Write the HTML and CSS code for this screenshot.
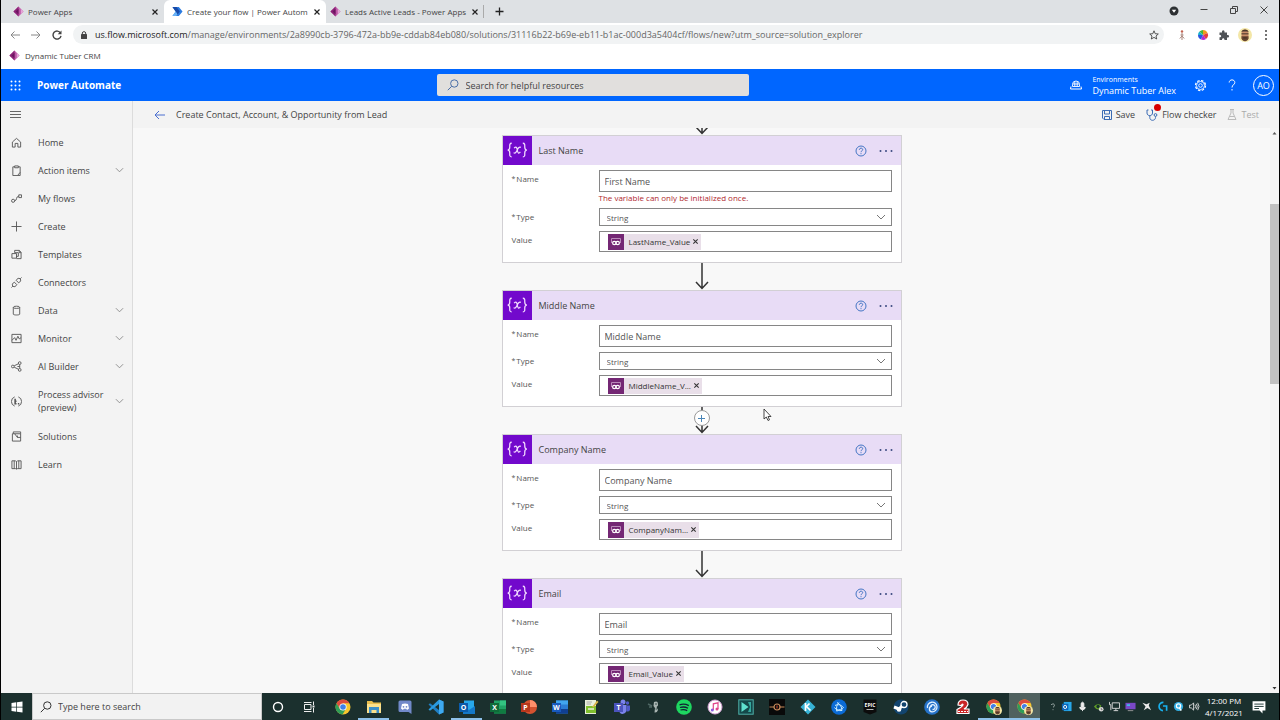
FILE: index.html
```html
<!DOCTYPE html>
<html lang="en">
<head>
    <meta charset="UTF-8">
    <meta name="viewport" content="width=device-width, initial-scale=1.0">
    <title>Create your flow | Power Automate</title>
    <link rel="stylesheet" href="styles.css">
</head>
<body>

<!-- Shared icons -->
<svg class="symbols" aria-hidden="true">
    <symbol id="i-apps" viewBox="0 0 12 12">
        <path d="M6 0.500L11.500 6L6 11.500L0.500 6Z" fill="#c05aa8"/>
        <path d="M6 0.500L0.500 6L6 11.500Z" fill="#8a2277"/>
        <path d="M6 0.500L11.500 6L8.500 9V3Z" fill="#e3a5d6"/>
        <path d="M6 3L3 6L6 9Z" fill="#6b1560"/>
    </symbol>
    <symbol id="i-x" viewBox="0 0 8 8"><path d="M1.500 1.500L6.500 6.500M6.500 1.500L1.500 6.500" fill="none" stroke="currentColor" stroke-width="1.200"/></symbol>
    <symbol id="i-chevron" viewBox="0 0 10 6"><path d="M1 1L5 5L9 1" fill="none" stroke="currentColor"/></symbol>
    <symbol id="i-arrow" viewBox="0 0 14 27"><path d="M7 0V25M1 19L7 25.500L13 19" fill="none" stroke="#333" stroke-width="1.500"/></symbol>
    <symbol id="i-help" viewBox="0 0 12 12">
        <circle cx="6" cy="6" r="5" fill="none" stroke="#4475c4"/>
        <path d="M4.300 4.800C4.300 2.600 7.700 2.700 7.700 4.600C7.700 5.900 6 5.700 6 7.200M6 8.200V9.200" fill="none" stroke="#4475c4"/>
    </symbol>
    <symbol id="i-dots" viewBox="0 0 14 4"><g fill="#3b4a80"><circle cx="1.500" cy="2" r="1"/><circle cx="7" cy="2" r="1"/><circle cx="12.500" cy="2" r="1"/></g></symbol>
    <symbol id="i-var" viewBox="0 0 30 30">
        <g fill="none" stroke="#f3dcff" stroke-width="1.300">
            <path d="M9 7.500C6.500 7.500 7 9.500 7 11.500C7 13.500 6.500 14.500 4.800 14.500C6.500 14.500 7 15.500 7 17.500C7 19.500 6.500 21.500 9 21.500"/>
            <path d="M20.500 7.500C23 7.500 22.500 9.500 22.500 11.500C22.500 13.500 23 14.500 24.700 14.500C23 14.500 22.500 15.500 22.500 17.500C22.500 19.500 23 21.500 20.500 21.500"/>
            <path d="M11.500 12.500C13.500 10.500 14.300 11.500 14.800 14.500C15.300 17.800 16.200 18.500 18 16.500M18.500 11.800C16.500 10.800 15.500 13 14.500 15C13.500 17.200 12.500 18.500 11 17.200"/>
        </g>
    </symbol>
    <symbol id="i-cds" viewBox="0 0 16 16">
        <rect width="16" height="16" fill="#742774"/>
        <path d="M3.500 9V4.500H12.500V9" fill="none" stroke="#b98ab9"/>
        <circle cx="6.300" cy="9" r="1.700" fill="none" stroke="#fff" stroke-width="1.200"/>
        <circle cx="9.700" cy="9" r="1.700" fill="none" stroke="#fff" stroke-width="1.200"/>
    </symbol>
    <symbol id="i-chrome" viewBox="0 0 16 16">
        <circle cx="8" cy="8" r="7.500" fill="#f7c52d"/>
        <path d="M1.500 4.200A7.500 7.500 0 0 1 14.500 4.300H8L4.800 9.800Z" fill="#dd4b3e"/>
        <path d="M1.500 4.200A7.500 7.500 0 0 0 7.500 15.500L11 9.800L4.800 9.800Z" fill="#2f9d58"/>
        <circle cx="8" cy="8" r="3.600" fill="#fff"/>
        <circle cx="8" cy="8" r="2.800" fill="#3f7fe8"/>
    </symbol>
    <symbol id="i-face" viewBox="0 0 12 12">
        <circle cx="6" cy="6" r="6" fill="#f3e6a6"/>
        <path d="M3 4C3 0.500 9 0.500 9 4V8C9 12 3 12 3 8Z" fill="#c98d67"/>
        <path d="M3 3.500C3 0.500 9 0.500 9 3.500L8 3H4Z" fill="#49372c"/>
        <path d="M3 7H9V9C8 12 4 12 3 9Z" fill="#68452f"/>
        <path d="M3 5H9M4.500 8.500H7.500" stroke="#3a2c24" stroke-width="0.800"/>
    </symbol>
</svg>

<!-- Browser window -->
<div class="tabs">
    <a href="#" class="tab">
        <svg class="tab-icon"><use href="#i-apps"/></svg>
        <span class="tab-title">Power Apps</span>
        <svg class="tab-close"><use href="#i-x"/></svg>
    </a>
    <a href="#" class="tab current">
        <svg class="tab-icon" viewBox="0 0 12 12"><path d="M0.500 1H7.500L11.500 6L7.500 11H0.500L4 6Z" fill="#2b7be0"/><path d="M0.500 1H5L8.500 6L6 9.500L4 6Z" fill="#174aa8"/><path d="M0.500 11L4 6L6 9L4.500 11Z" fill="#69b2f5"/></svg>
        <span class="tab-title">Create your flow | Power Autom</span>
        <svg class="tab-close"><use href="#i-x"/></svg>
    </a>
    <a href="#" class="tab last">
        <svg class="tab-icon"><use href="#i-apps"/></svg>
        <span class="tab-title">Leads Active Leads - Power Apps</span>
        <svg class="tab-close"><use href="#i-x"/></svg>
    </a>
    <button class="new-tab" aria-label="New tab"><svg width="9" height="9" viewBox="0 0 9 9"><path d="M4.500 0.500V8.500M0.500 4.500H8.500" stroke="#222" stroke-width="1.300"/></svg></button>
    <div class="window-buttons">
        <button aria-label="Search tabs"><svg width="10" height="14" viewBox="0 0 10 14"><circle cx="5" cy="8" r="4.500" fill="#2d3033"/><path d="M2.800 6.800H7.200L5 9.800Z" fill="#fff"/></svg></button>
        <button aria-label="Minimize"><svg width="8" height="8" viewBox="0 0 8 8"><path d="M0.500 3.500H7.500" stroke="#444"/></svg></button>
        <button aria-label="Restore"><svg width="8" height="8" viewBox="0 0 8 8"><path d="M0.500 2.500H5.500V7.500H0.500ZM2.500 2V0.500H7.500V5.500H6" fill="none" stroke="#444"/></svg></button>
        <button aria-label="Close"><svg width="8" height="8" viewBox="0 0 8 8"><path d="M0.500 0.500L7.500 7.500M7.500 0.500L0.500 7.500" stroke="#444"/></svg></button>
    </div>
</div>

<div class="toolbar">
    <button aria-label="Back"><svg width="10" height="8" viewBox="0 0 10 8"><path d="M10 4H1M4.500 0.500L1 4L4.500 7.500" fill="none" stroke="#888"/></svg></button>
    <button aria-label="Forward"><svg width="10" height="8" viewBox="0 0 10 8"><path d="M0 4H9M5.500 0.500L9 4L5.500 7.500" fill="none" stroke="#888"/></svg></button>
    <button aria-label="Reload"><svg width="10" height="10" viewBox="0 0 10 10"><path d="M8.500 3A4 4 0 1 0 9 5.800" fill="none" stroke="#444" stroke-width="1.400"/><path d="M9.500 0.500V4.300H5.700Z" fill="#444"/></svg></button>
    <div class="omnibox">
        <svg width="6" height="8" viewBox="0 0 6 8"><rect y="3" width="6" height="5" rx="0.500" fill="#444"/><path d="M1.300 3V2C1.300 0.200 4.700 0.200 4.700 2V3" fill="none" stroke="#444"/></svg>
        <div class="url"><b>us.flow.microsoft.com</b>/manage/environments/2a8990cb-3796-472a-bb9e-cddab84eb080/solutions/31116b22-b69e-eb11-b1ac-000d3a5404cf/flows/new?utm_source=solution_explorer</div>
        <svg width="10" height="10" viewBox="0 0 10 10"><path d="M5 0.800L6.200 3.700L9.300 4L7 6L7.700 9L5 7.400L2.300 9L3 6L0.700 4L3.800 3.700Z" fill="none" stroke="#444" stroke-width="0.900"/></svg>
    </div>
    <div class="extensions">
        <button aria-label="Extension"><svg width="12" height="12" viewBox="0 0 12 12"><circle cx="6" cy="2.500" r="1.200" fill="#c2604f"/><path d="M6 4V11M4.500 6H7.500M3.800 9.500L6 7L8.200 9.500" fill="none" stroke="#a9877e"/></svg></button>
        <button aria-label="Color picker"><svg width="12" height="12" viewBox="0 0 12 12"><path d="M6 6V1A5 5 0 0 1 10.500 4Z" fill="#f09a1a"/><path d="M6 6L10.500 4A5 5 0 0 1 9 10Z" fill="#e33d3d"/><path d="M6 6L9 10A5 5 0 0 1 4 10.600Z" fill="#b42bd0"/><path d="M6 6L4 10.600A5 5 0 0 1 1 6Z" fill="#2b55e0"/><path d="M6 6H1A5 5 0 0 1 2.500 2.500Z" fill="#1bb0d0"/><path d="M6 6L2.500 2.500A5 5 0 0 1 6 1Z" fill="#42b63c"/></svg></button>
        <button aria-label="Extensions"><svg width="12" height="12" viewBox="0 0 12 12"><path d="M1.500 3.500H4C3.500 0.500 7 0.500 6.500 3.500H9V6C11.800 5.500 11.800 9 9 8.500V11H6.500C6.500 8.500 4 8.500 4 11H1.500V8.300C3.800 8.300 3.800 6 1.500 6Z" fill="#505357"/></svg></button>
        <button aria-label="Profile"><svg width="14" height="14"><use href="#i-face"/></svg></button>
        <button aria-label="Menu"><svg width="12" height="12" viewBox="0 0 12 12"><g fill="#444"><circle cx="6" cy="2" r="1"/><circle cx="6" cy="6" r="1"/><circle cx="6" cy="10" r="1"/></g></svg></button>
    </div>
</div>

<div class="bookmarks">
    <a href="#"><svg class="tab-icon"><use href="#i-apps"/></svg>Dynamic Tuber CRM</a>
</div>

<!-- Power Automate header -->
<header class="header">
    <div class="brand">
        <button aria-label="App launcher"><svg width="11" height="11" viewBox="0 0 11 11"><g fill="#fff"><circle cx="1.500" cy="1.500" r="1"/><circle cx="5.500" cy="1.500" r="1"/><circle cx="9.500" cy="1.500" r="1"/><circle cx="1.500" cy="5.500" r="1"/><circle cx="5.500" cy="5.500" r="1"/><circle cx="9.500" cy="5.500" r="1"/><circle cx="1.500" cy="9.500" r="1"/><circle cx="5.500" cy="9.500" r="1"/><circle cx="9.500" cy="9.500" r="1"/></g></svg></button>
        <span class="title">Power Automate</span>
    </div>
    <label class="search">
        <svg width="12" height="12" viewBox="0 0 12 12"><circle cx="7.300" cy="4.500" r="3.700" fill="none" stroke="#4a6fa8"/><path d="M4.700 7.300L0.800 11.200" stroke="#4a6fa8"/></svg>
        <input type="text" placeholder="Search for helpful resources" aria-label="Search for helpful resources">
    </label>
    <div class="header-right">
        <button class="environment">
            <svg width="12" height="12" viewBox="0 0 12 12"><path d="M2.500 7.500V5.500A3.500 3.500 0 0 1 9.500 5.500V7.500ZM2.500 5H9.500M4.800 2.500V7.500M7.200 2.500V7.500" fill="none" stroke="#fff" stroke-width="0.900"/><path d="M1 7.500L0.500 10H11.500L11 7.500" fill="none" stroke="#fff"/></svg>
            <span><small>Environments</small>Dynamic Tuber Alex</span>
        </button>
        <button class="header-icon" aria-label="Settings"><svg width="13" height="13" viewBox="0 0 13 13"><circle cx="6.500" cy="6.500" r="5" fill="none" stroke="#fff" stroke-width="1.300" stroke-dasharray="2.400 1.520"/><circle cx="6.500" cy="6.500" r="4" fill="none" stroke="#fff" stroke-width="0.800"/><circle cx="6.500" cy="6.500" r="1.800" fill="none" stroke="#fff" stroke-width="0.900"/></svg></button>
        <button class="header-icon" aria-label="Help"><svg width="8" height="12" viewBox="0 0 8 12"><path d="M1.200 3.500C1.200 0 6.800 0 6.800 3.500C6.800 5.800 4 5.800 4 8.500M4 10V11.500" fill="none" stroke="#fff"/></svg></button>
        <button class="avatar">AO</button>
    </div>
</header>

<div class="app">
    <nav class="sidebar">
        <button class="menu" aria-label="Collapse menu"><svg width="11" height="7" viewBox="0 0 11 7"><path d="M0 0.500H11M0 3.500H11M0 6.500H11" stroke="#666"/></svg></button>
        <a href="#"><svg viewBox="0 0 12 12"><path d="M1.500 5.500L6 1.500L10.500 5.500V11H7.500V7H4.500V11H1.500Z"/></svg><span>Home</span></a>
        <a href="#"><svg viewBox="0 0 12 12"><path d="M4 2H2V11.500H10V2H8M4 1H8V3H4ZM10 8L7.500 11"/></svg><span>Action items</span><svg class="chevron"><use href="#i-chevron"/></svg></a>
        <a href="#"><svg viewBox="0 0 12 12"><circle cx="2.300" cy="8.500" r="1.700"/><path d="M4 8.500C7 8.500 5 3.500 8.500 3.500M8.500 2H11.500V5H8.500Z"/></svg><span>My flows</span></a>
        <a href="#"><svg viewBox="0 0 12 12"><path d="M6 0.500V11.500M0.500 6H11.500"/></svg><span>Create</span></a>
        <a href="#"><svg viewBox="0 0 12 12"><path d="M4 4V1.500H9L11 3.500V10.500H6M1 5H6V10H1ZM4 4H8V8H6M9 1.500V4H11"/></svg><span>Templates</span></a>
        <a href="#"><svg viewBox="0 0 12 12"><path d="M0.500 11.500L2 10M2 10C0.500 8 2 7 3.500 5.500L6.500 8.500C5 10 4 11.500 2 10ZM5.500 3.500L8.500 6.500C10 5 11.500 4 10 2C8 0.500 7 2 5.500 3.500M10 2L11.500 0.500"/></svg><span>Connectors</span></a>
        <a href="#"><svg viewBox="0 0 12 12"><path d="M2.500 2.500V10C2.500 11.200 9.500 11.200 9.500 10V2.500"/><ellipse cx="6" cy="2.500" rx="3.500" ry="1.200"/></svg><span>Data</span><svg class="chevron"><use href="#i-chevron"/></svg></a>
        <a href="#"><svg viewBox="0 0 12 12"><path d="M1 1.500H11V10.500H1ZM1 8L4 5L5.500 8L7.500 3.500L9 6.500L11 5"/></svg><span>Monitor</span><svg class="chevron"><use href="#i-chevron"/></svg></a>
        <a href="#"><svg viewBox="0 0 12 12"><circle cx="2" cy="6" r="1.500"/><circle cx="9.500" cy="2.300" r="1.500"/><circle cx="9.500" cy="9.700" r="1.500"/><path d="M3.500 5.200L8.200 3M3.500 6.800L8.200 9M9.500 4V8M7 6H9.500"/></svg><span>AI Builder</span><svg class="chevron"><use href="#i-chevron"/></svg></a>
        <a href="#" class="two-lines"><svg viewBox="0 0 12 12"><path d="M4 1A5.300 5.300 0 0 0 4 11M8 1A5.300 5.300 0 0 1 8 11"/><path d="M4.500 3V8.500H6M7.500 8.500H9M4.500 5.800H6" stroke-width="1.700"/></svg><span>Process advisor (preview)</span><svg class="chevron"><use href="#i-chevron"/></svg></a>
        <a href="#"><svg viewBox="0 0 12 12"><path d="M1.500 3V11H10.500V3ZM2.500 3V1H10.500V3M4 3L7 7H10.500M7 7V5"/></svg><span>Solutions</span></a>
        <a href="#"><svg viewBox="0 0 12 12"><path d="M1 2H5L6 3L7 2H11V10.500H7L6 11L5 10.500H1ZM6 3V11M3.500 2V10.500M8.500 2V10.500"/></svg><span>Learn</span></a>
    </nav>

    <main class="main">
        <div class="commands">
            <a href="#" class="back" aria-label="Back"><svg width="11" height="10" viewBox="0 0 11 10"><path d="M11 5H1M5 1L1 5L5 9" fill="none" stroke="#4a6fd0"/></svg></a>
            <span class="flow-name">Create Contact, Account, &amp; Opportunity from Lead</span>
            <button><svg width="10" height="10" viewBox="0 0 10 10"><path d="M0.500 0.500H9.500V9.500H2L0.500 8ZM2.500 0.500V4H7.500V0.500M2.500 9.500V6.500H7.500V9.500" fill="none" stroke="#3c6cb4"/></svg>Save</button>
            <button><span class="checker-icon"><svg width="12" height="12" viewBox="0 0 12 12"><path d="M2.500 1H1V4C1 7.500 6.500 7.500 6.500 4V1H5M3.800 6.500V8.500C3.800 12.500 9.500 12 9.500 8.500V7.500" fill="none" stroke="#3c6cb4"/><circle cx="9.500" cy="6" r="1.400" fill="none" stroke="#3c6cb4"/></svg><i class="badge"></i></span>Flow checker</button>
            <button disabled><svg width="10" height="11" viewBox="0 0 10 11"><path d="M3 0.500H7M4 0.500V4L1 10.500H9L6 4V0.500M2.500 7.500H7.500" fill="none" stroke="#bbb"/></svg>Test</button>
        </div>

        <div class="canvas">
            <div class="flow">
                <div class="connector cut"><svg><use href="#i-arrow"/></svg></div>

                <section class="card">
                    <div class="card-header">
                        <svg class="card-icon"><use href="#i-var"/></svg>
                        <h2>Last Name</h2>
                        <button aria-label="Help"><svg width="12" height="12"><use href="#i-help"/></svg></button>
                        <button aria-label="More"><svg width="14" height="4"><use href="#i-dots"/></svg></button>
                    </div>
                    <div class="card-body">
                        <label for="name1"><sup>*</sup>Name</label>
                        <div><input type="text" id="name1" value="First Name"><p class="error">The variable can only be initialized once.</p></div>
                        <label for="type1"><sup>*</sup>Type</label>
                        <div class="select"><select id="type1"><option>String</option></select><svg><use href="#i-chevron"/></svg></div>
                        <span class="label">Value</span>
                        <div class="value"><span class="token"><svg><use href="#i-cds"/></svg>LastName_Value<button aria-label="Remove"><svg><use href="#i-x"/></svg></button></span></div>
                    </div>
                </section>

                <div class="connector"><svg><use href="#i-arrow"/></svg></div>

                <section class="card">
                    <div class="card-header">
                        <svg class="card-icon"><use href="#i-var"/></svg>
                        <h2>Middle Name</h2>
                        <button aria-label="Help"><svg width="12" height="12"><use href="#i-help"/></svg></button>
                        <button aria-label="More"><svg width="14" height="4"><use href="#i-dots"/></svg></button>
                    </div>
                    <div class="card-body">
                        <label for="name2"><sup>*</sup>Name</label>
                        <div><input type="text" id="name2" value="Middle Name"></div>
                        <label for="type2"><sup>*</sup>Type</label>
                        <div class="select"><select id="type2"><option>String</option></select><svg><use href="#i-chevron"/></svg></div>
                        <span class="label">Value</span>
                        <div class="value"><span class="token"><svg><use href="#i-cds"/></svg>MiddleName_V...<button aria-label="Remove"><svg><use href="#i-x"/></svg></button></span></div>
                    </div>
                </section>

                <div class="connector">
                    <svg><use href="#i-arrow"/></svg>
                    <button class="insert" aria-label="Insert a new step"><svg viewBox="0 0 9 9"><path d="M4.500 1V8M1 4.500H8" stroke="#4b86b8"/></svg></button>
                    <svg class="cursor" viewBox="0 0 9 14"><path d="M1 1V11L3.300 9L5 12.500L6.500 11.800L5 8.500H8Z" fill="#fff" stroke="#333" stroke-width="0.900"/></svg>
                </div>

                <section class="card">
                    <div class="card-header">
                        <svg class="card-icon"><use href="#i-var"/></svg>
                        <h2>Company Name</h2>
                        <button aria-label="Help"><svg width="12" height="12"><use href="#i-help"/></svg></button>
                        <button aria-label="More"><svg width="14" height="4"><use href="#i-dots"/></svg></button>
                    </div>
                    <div class="card-body">
                        <label for="name3"><sup>*</sup>Name</label>
                        <div><input type="text" id="name3" value="Company Name"></div>
                        <label for="type3"><sup>*</sup>Type</label>
                        <div class="select"><select id="type3"><option>String</option></select><svg><use href="#i-chevron"/></svg></div>
                        <span class="label">Value</span>
                        <div class="value"><span class="token"><svg><use href="#i-cds"/></svg>CompanyNam...<button aria-label="Remove"><svg><use href="#i-x"/></svg></button></span></div>
                    </div>
                </section>

                <div class="connector"><svg><use href="#i-arrow"/></svg></div>

                <section class="card">
                    <div class="card-header">
                        <svg class="card-icon"><use href="#i-var"/></svg>
                        <h2>Email</h2>
                        <button aria-label="Help"><svg width="12" height="12"><use href="#i-help"/></svg></button>
                        <button aria-label="More"><svg width="14" height="4"><use href="#i-dots"/></svg></button>
                    </div>
                    <div class="card-body">
                        <label for="name4"><sup>*</sup>Name</label>
                        <div><input type="text" id="name4" value="Email"></div>
                        <label for="type4"><sup>*</sup>Type</label>
                        <div class="select"><select id="type4"><option>String</option></select><svg><use href="#i-chevron"/></svg></div>
                        <span class="label">Value</span>
                        <div class="value"><span class="token"><svg><use href="#i-cds"/></svg>Email_Value<button aria-label="Remove"><svg><use href="#i-x"/></svg></button></span></div>
                    </div>
                </section>
            </div>

            <div class="scrollbar">
                <svg viewBox="0 0 9 9"><path d="M2.500 6L4.500 3.500L6.500 6Z" fill="#555"/></svg>
                <div class="track"><div class="thumb"></div></div>
                <svg viewBox="0 0 9 9"><path d="M2.500 3.500L4.500 6L6.500 3.500Z" fill="#333"/></svg>
            </div>
        </div>
    </main>
</div>

<!-- Windows taskbar -->
<footer class="taskbar">
    <button aria-label="Start"><svg viewBox="0 0 16 16"><path d="M2.500 4L7.300 3.300V7.700H2.500ZM8 3.200L13.500 2.500V7.700H8ZM2.500 8.400H7.300V12.800L2.500 12.100ZM8 8.400H13.500V13.500L8 12.800Z" fill="#fff"/></svg></button>
    <label class="task-search">
        <svg width="12" height="12" viewBox="0 0 12 12"><circle cx="7.300" cy="4.500" r="3.700" fill="none" stroke="#333"/><path d="M4.700 7.300L0.800 11.200" stroke="#333"/></svg>
        <input type="text" placeholder="Type here to search" aria-label="Type here to search">
    </label>
    <button aria-label="Cortana"><svg viewBox="0 0 16 16"><circle cx="8" cy="8" r="4.500" fill="none" stroke="#fff" stroke-width="1.400"/></svg></button>
    <button class="task-view" aria-label="Task view"><svg viewBox="0 0 16 16"><path d="M3 3.500H10.500M3 12.500H10.500M3.500 5.500H10V10.500H3.500ZM12.500 2.500V6M12.500 9V13.500" fill="none" stroke="#eee"/><path d="M11.500 6.500H13.500V8.500H11.500Z" fill="#eee"/></svg></button>
    <button aria-label="Chrome"><svg><use href="#i-chrome"/></svg></button>
    <button class="open" aria-label="File Explorer"><svg viewBox="0 0 16 16"><path d="M1 2H6L7.500 3.500H15V14H1Z" fill="#e9bd4d"/><path d="M1 5H15V14H1Z" fill="#fbe08c"/><path d="M3 8H13V14H10.500V11H5.500V14H3Z" fill="#3c8fc9"/></svg></button>
    <button aria-label="Discord"><svg viewBox="0 0 16 16"><path d="M3 1.500H13Q14.500 1.500 14.500 3V15L11.500 13H3Q1.500 13 1.500 11.500V3Q1.500 1.500 3 1.500Z" fill="#7289c9"/><path d="M5 5Q8 3.800 11 5L12 9.500L10 11L9.300 9.800H6.700L6 11L4 9.500Z" fill="#fff"/><circle cx="6.500" cy="7.800" r="0.900" fill="#7289c9"/><circle cx="9.500" cy="7.800" r="0.900" fill="#7289c9"/></svg></button>
    <button aria-label="Visual Studio Code"><svg viewBox="0 0 16 16"><path d="M11 0.500L15.500 2.500V13.500L11 15.500L0.500 5.500L2 4.300L11 11Z" fill="#1f7ec2"/><path d="M11 0.500V5L2 11.700L0.500 10.500Z" fill="#2a9ae0"/><path d="M11 0.500L15.500 2.500V13.500L11 15.500Z" fill="#3eaaf0"/></svg></button>
    <button class="open" aria-label="Outlook"><svg viewBox="0 0 16 16"><rect x="5" y="1.500" width="10" height="12" fill="#28a8ea"/><path d="M4 7L10 11L16 7V15H4Z" fill="#1478c8"/><rect y="4" width="9" height="9" fill="#0a5bab"/><text x="4.500" y="11" font-size="7">O</text></svg></button>
    <button aria-label="Excel"><svg viewBox="0 0 16 16"><rect x="4" y="1.500" width="12" height="13" fill="#21a366"/><rect x="10" y="1.500" width="6" height="5" fill="#33c481"/><rect x="4" y="10" width="12" height="4.500" fill="#107c41"/><rect y="4" width="9" height="9" fill="#0f6b39"/><text x="4.500" y="11" font-size="7">X</text></svg></button>
    <button aria-label="PowerPoint"><svg viewBox="0 0 16 16"><circle cx="9" cy="8" r="7" fill="#d35230"/><path d="M9 1A7 7 0 0 1 16 8H9Z" fill="#ff8f6b"/><rect y="4" width="9" height="9" fill="#b7371c"/><text x="4.500" y="11" font-size="7">P</text></svg></button>
    <button aria-label="Word"><svg viewBox="0 0 16 16"><rect x="4" y="1.500" width="12" height="13" fill="#2b7cd3"/><rect x="4" y="1.500" width="12" height="4" fill="#41a5ee"/><rect x="4" y="10" width="12" height="4.500" fill="#103f91"/><rect y="4" width="9" height="9" fill="#185abd"/><text x="4.500" y="11" font-size="7">W</text></svg></button>
    <button aria-label="Notepad++"><svg viewBox="0 0 16 16"><path d="M2 1H13V15H2Z" fill="#e9efdc"/><path d="M3 7H13V14H3Z" fill="#7fbf2e"/><path d="M5 10H11" stroke="#e9efdc" stroke-width="1.500"/><path d="M9 8L14 1.500L15.500 3L10.500 8.500Z" fill="#d8b54a"/><path d="M3.500 3H9M3.500 5H8" stroke="#aaa"/></svg></button>
    <button aria-label="Teams"><svg viewBox="0 0 16 16"><circle cx="9" cy="3" r="2.500" fill="#7b83eb"/><circle cx="13.500" cy="4" r="1.700" fill="#5059c9"/><path d="M5 6H12.500V12Q11 15.500 8 15Q5 14 5 11Z" fill="#7b83eb"/><path d="M12.500 6.500H16V11Q15 13 12.500 12.500Z" fill="#5059c9"/><rect y="4" width="9" height="9" fill="#4b53bc"/><text x="4.500" y="11" font-size="7">T</text></svg></button>
    <button aria-label="Game launcher"><svg viewBox="0 0 16 16"><path d="M9 3Q13 1.500 13 5Q13.500 7 11.500 8L13 11Q12 14 9.500 13.500L10 9L8.500 7Z" fill="#a9b5b2"/><path d="M3 5L7 7M4 8H7" stroke="#4e6663" stroke-width="1.500"/><path d="M10 5H12M10.500 10H12" stroke="#38504d"/></svg></button>
    <button aria-label="Spotify"><svg viewBox="0 0 16 16"><circle cx="8" cy="8" r="7.800" fill="#1ed760"/><path d="M3.500 5.800Q8.500 4.300 12.800 6.600M4 8.500Q8.300 7.200 12 9.200M4.500 11Q8 10 11.200 11.600" fill="none" stroke="#123" stroke-width="1.300"/></svg></button>
    <button aria-label="iTunes"><svg viewBox="0 0 16 16"><circle cx="8" cy="8" r="7" fill="#fff" stroke="#d9a4d8"/><path d="M6.300 11V4.800L11 3.800V10" fill="none" stroke="#e0458a" stroke-width="1.200"/><circle cx="5.300" cy="11" r="1.500" fill="#8a5be0"/><circle cx="10" cy="10" r="1.500" fill="#e0458a"/></svg></button>
    <button aria-label="Filmora"><svg viewBox="0 0 16 16"><rect x="0.800" y="0.800" width="14.400" height="14.400" fill="#14484a" stroke="#4fb0a8"/><path d="M3.500 3L10.500 8L3.500 13Z" fill="#5fe0cf"/><path d="M10 3H13V13H10L12 8Z" fill="#35a79d"/></svg></button>
    <button aria-label="Game"><svg viewBox="0 0 16 16"><rect width="16" height="16" fill="#090909"/><circle cx="8" cy="8" r="3" fill="none" stroke="#c98b5b" stroke-width="1.200"/><path d="M0.500 8H5M11 8H15.500" stroke="#c98b5b" stroke-width="1.200"/><path d="M8 6.500V9.500" stroke="#e04a30"/></svg></button>
    <button aria-label="Kodi"><svg viewBox="0 0 16 16"><path d="M8 0.500L15.500 8L8 15.500L0.500 8Z" fill="#37b3d6"/><path d="M5.500 4V12M6 8L9.500 4.500M7 8L10.500 11.500" stroke="#fff" stroke-width="1.700"/></svg></button>
    <button aria-label="Battle.net"><svg viewBox="0 0 16 16"><circle cx="8" cy="8" r="7.800" fill="#0b6bd6"/><path d="M6 3.500C9 5 11 8 11 11.500C8 12 5 11 3.500 8.500M6 12.500C5 9 5.500 6 8 3.500M4 6.500C7 5 10 5.500 12.500 8.500C11 10 8 11.500 5 11" fill="none" stroke="#c9ecff"/></svg></button>
    <button aria-label="Epic Games"><svg viewBox="0 0 16 16"><path d="M1.500 0.500H14.500V13L8 15.500L1.500 13Z" fill="#0c0c0c"/><text x="8" y="8" font-size="5">EPIC</text><path d="M4.500 10.500H11.500" stroke="#bbb"/></svg></button>
    <button aria-label="Steam"><svg viewBox="0 0 16 16"><circle cx="8" cy="8" r="7.500" fill="#12446f"/><path d="M1 8L6 10L10 6" fill="none" stroke="#fff" stroke-width="3"/><circle cx="11" cy="5.500" r="3" fill="#12446f" stroke="#fff" stroke-width="1.300"/><circle cx="6" cy="10.500" r="2.300" fill="#fff"/></svg></button>
    <button aria-label="Ubisoft"><svg viewBox="0 0 16 16"><circle cx="8" cy="8" r="7.800" fill="#2672c9"/><path d="M3.500 9A4.800 4.800 0 1 1 8 12.800C4.500 12.500 4.500 7.500 8 7M6.500 8.800A2.400 2.400 0 1 1 8.500 10.500" fill="none" stroke="#e1f0ff" stroke-width="1.300"/></svg></button>
    <button aria-label="Game 2"><svg viewBox="0 0 16 16"><path d="M3 6Q3 1 8 1Q13 1 13 5.500Q12 8.500 9 10H14V14.500H2V10.500Q8 7.500 8 5.500Q7 4.500 6.500 6.500Z" fill="#c92626" stroke="#fff" stroke-width="1.200"/><path d="M3 12.500H13" stroke="#fff" stroke-dasharray="2 1"/></svg></button>
    <button class="open" aria-label="Chrome window 1"><svg viewBox="0 0 16 16"><use href="#i-chrome" width="15" height="15"/><use href="#i-face" x="7" y="7" width="9" height="9"/></svg></button>
    <button class="open focused" aria-label="Chrome window 2"><svg viewBox="0 0 16 16"><use href="#i-chrome" width="15" height="15"/><use href="#i-face" x="7" y="7" width="9" height="9"/></svg></button>

    <div class="tray">
        <svg class="small" viewBox="3 0 6 12"><path d="M4 4Q7.500 2 7.500 5Q7 6.500 6 7M6 9V10" fill="none" stroke="#a9b5b2"/></svg>
        <svg viewBox="0 0 12 12"><rect x="3" y="1" width="8.500" height="10" fill="#28a8ea"/><rect x="1" y="3" width="7" height="7" fill="#0a64b8"/><circle cx="4.500" cy="6.500" r="1.700" fill="none" stroke="#fff"/></svg>
        <svg viewBox="0 0 12 12"><path d="M4.500 2.500Q6 0 7.500 2.500V7H4.500ZM3 6.500Q3 9.500 6 9.500Q9 9.500 9 6.500M6 9V11" fill="#eee" stroke="#eee"/></svg>
        <svg viewBox="0 0 12 12"><path d="M1 6Q5 1.500 9 5L8 9Q4 10.500 1 6Z" fill="#5f9c28"/><circle cx="5.500" cy="6" r="1.800" fill="#15302e"/><circle cx="9" cy="9" r="2.500" fill="#ddd"/><path d="M9 7.500V9.500H10.500" fill="none" stroke="#444" stroke-width="0.700"/></svg>
        <svg viewBox="0 0 12 12"><path d="M3.500 2H11.500V8H3.500ZM5 10.500H10M7.500 8V10.500M0.500 1V4H2V10" fill="none" stroke="#ddd"/></svg>
        <svg viewBox="0 0 12 12"><rect x="0.500" y="2" width="11" height="7" fill="#7a48c8"/><rect x="2" y="3.500" width="3.500" height="2" fill="#42b6e8"/><path d="M3 10.500H9" stroke="#999"/></svg>
        <svg viewBox="0 0 12 12"><path d="M1.500 2L6 3.500L9.500 2L8.500 5L11 10L7 7.500L3 10L5 6Z" fill="#e9e9e9"/></svg>
        <svg viewBox="0 0 12 12"><path d="M7 1.500A4.500 4.500 0 1 0 6.500 10.500" fill="none" stroke="#18b2f0" stroke-width="1.800"/><path d="M6.500 5.500H10.500V10.500" fill="none" stroke="#18b2f0" stroke-width="1.800"/></svg>
        <svg viewBox="0 0 12 12"><circle cx="6" cy="6" r="5" fill="#35b0e4"/><circle cx="6" cy="5.500" r="2.300" fill="none" stroke="#fff" stroke-width="1.400"/><path d="M7 7.500L9 10.500" stroke="#fff" stroke-width="1.500"/></svg>
        <svg viewBox="0 0 12 12"><path d="M0.500 4.500H2.500L5 2V10L2.500 7.500H0.500ZM6.500 4Q7.800 6 6.500 8M8 3Q10 6 8 9M9.500 2Q12.300 6 9.500 10" fill="none" stroke="#eee" stroke-width="0.900"/></svg>
        <div class="clock">12:00 PM<br>4/17/2021</div>
        <button aria-label="Notifications"><svg viewBox="0 0 12 12"><path d="M0.500 1H11.500V9H9V11.500L6.500 9H0.500Z" fill="#fff"/><path d="M2 3.500H10M2 5.500H10M2 7.300H6" stroke="#15302e" stroke-width="0.800"/></svg></button>
    </div>
</footer>

</body>
</html>
```
FILE: styles.css
```css
/* Color scheme */
:root {
    --blue: #0066ff;
    --panel: #f3f3f3;
    --canvas: #f8f8f8;
    --lavender: #e8dcf6;
    --purple: #7209cc;
    --text: #444;
    --taskbar: #1b302e;
}

* {
    box-sizing: border-box;
}

body {
    font-family: "Open Sans", "Noto Sans", sans-serif;
    font-size: 9px;
    color: var(--text);
    margin: 0;
    height: 100vh;
    display: flex;
    flex-direction: column;
    border-left: 1px solid #000;
    border-right: 1px solid #000;
    overflow: hidden;
}

button {
    font: inherit;
    color: inherit;
    background: none;
    border: none;
    padding: 0;
    display: flex;
    align-items: center;
    justify-content: center;
    cursor: pointer;
}

a {
    color: inherit;
    text-decoration: none;
}

svg {
    display: block;
    flex-shrink: 0;
}

.symbols {
    position: absolute;
    width: 0;
    height: 0;
}

/* Browser window */
.tabs {
    display: flex;
    height: 23px;
    background-color: #dee1e4;
    font-size: 8px;
}

.tab {
    display: flex;
    align-items: center;
    gap: 4px;
    width: 163px;
    padding: 0 5px 0 12px;
}

.tab.current {
    width: 162px;
    padding-left: 8px;
    background-color: #fff;
    border-radius: 6px 6px 0 0;
}

.tab.last {
    width: 157px;
    padding: 0 4px;
}

.tab-icon {
    width: 11px;
    height: 11px;
}

.tab-title {
    flex: 1;
    white-space: nowrap;
}

.tab-close {
    width: 8px;
    height: 8px;
    color: #222;
}

.new-tab {
    width: 31px;
    border-left: 1px solid #aaa;
    height: 13px;
    margin-top: 5px;
}

.window-buttons {
    display: flex;
    height: 20px;
    margin-left: auto;
}

.window-buttons button {
    width: 30px;
}

.toolbar {
    display: flex;
    align-items: center;
    height: 23px;
    padding-left: 3px;
}

.toolbar button {
    width: 21px;
}

.omnibox {
    flex: 1;
    display: flex;
    align-items: center;
    gap: 8px;
    height: 19px;
    margin-left: 6px;
    padding: 0 5px 0 8px;
    border-radius: 10px;
    background-color: #f1f3f4;
}

.url {
    flex: 1;
    color: #666;
    white-space: nowrap;
    overflow: hidden;
}

.url b {
    font-weight: normal;
    color: #222;
}

.extensions {
    display: flex;
    padding: 0 3px 0 7px;
}

.bookmarks {
    display: flex;
    align-items: center;
    height: 23px;
    padding: 0 8px 5px;
    font-size: 8px;
}

.bookmarks a {
    display: flex;
    align-items: center;
    gap: 5px;
}

/* Header */
.header {
    display: flex;
    align-items: center;
    height: 32px;
    background-color: var(--blue);
    color: #fff;
}

.brand {
    display: flex;
    align-items: center;
    width: 34%;
    padding-left: 9px;
    gap: 16px;
}

.title {
    font-size: 10px;
    font-weight: bold;
}

.search {
    display: flex;
    align-items: center;
    gap: 7px;
    width: 312px;
    height: 22px;
    margin: 0 1px;
    padding-left: 10px;
    border-radius: 2px;
    background-color: #e1dfdd;
}

.search input,
.task-search input {
    flex: 1;
    min-width: 0;
    padding: 0;
    border: none;
    outline: none;
    background: none;
    font: inherit;
}

.search input::placeholder,
.task-search input::placeholder {
    color: #444;
    opacity: 1;
}

.header-right {
    display: flex;
    align-items: center;
    margin-left: auto;
    padding-right: 5px;
}

.environment {
    gap: 10px;
    margin-right: 9px;
    text-align: left;
    line-height: 11px;
}

.environment small {
    display: block;
    font-size: 7px;
}

.header-icon {
    width: 31px;
}

.avatar {
    width: 21px;
    height: 21px;
    margin-left: 6px;
    border: 1px solid #fff;
    border-radius: 50%;
}

/* Sidebar */
.app {
    flex: 1;
    display: flex;
    min-height: 0;
}

.sidebar {
    width: 132px;
    background-color: var(--panel);
    border-right: 1px solid #dcdcdc;
}

.menu {
    width: 29px;
    height: 27px;
}

.sidebar a {
    display: flex;
    align-items: center;
    height: 28px;
    padding: 0 8px 0 10px;
    line-height: 13px;
}

.sidebar a.two-lines {
    height: 42px;
}

.sidebar a svg {
    width: 11px;
    height: 11px;
    fill: none;
    stroke: #555;
}

.sidebar a span {
    flex: 1;
    margin-left: 16px;
}

.sidebar a .chevron {
    width: 9px;
    height: 6px;
    color: #888;
    stroke: none;
}

/* Flow designer */
.main {
    flex: 1;
    display: flex;
    flex-direction: column;
    min-width: 0;
    background-color: var(--canvas);
}

.commands {
    display: flex;
    align-items: center;
    gap: 11px;
    height: 27px;
    padding: 0 20px 0 21px;
    background-color: var(--panel);
}

.commands button {
    gap: 4px;
}

.commands button:disabled {
    color: #aaa;
}

.flow-name {
    flex: 1;
}

.checker-icon {
    position: relative;
}

.badge {
    position: absolute;
    top: -5px;
    right: -3px;
    width: 7px;
    height: 7px;
    border-radius: 50%;
    background-color: #d80000;
}

.canvas {
    flex: 1;
    display: flex;
    min-height: 0;
}

.flow {
    flex: 1;
    display: flex;
    flex-direction: column;
    align-items: center;
    overflow: hidden;
}

.connector {
    position: relative;
    display: flex;
    flex-direction: column;
    flex-shrink: 0;
    justify-content: flex-end;
    height: 27px;
}

.connector.cut {
    height: 7px;
}

.connector svg {
    width: 14px;
    height: 27px;
}

.connector .insert {
    position: absolute;
    left: -1px;
    top: 3px;
    width: 16px;
    height: 16px;
    border: 1px solid #999;
    border-radius: 50%;
    background-color: #fff;
}

.connector .insert svg {
    width: 9px;
    height: 9px;
}

.connector .cursor {
    position: absolute;
    left: 68px;
    top: 1px;
    width: 9px;
    height: 14px;
}

.card {
    width: 400px;
    flex-shrink: 0;
    background-color: #fff;
    border: 1px solid #d2d0d4;
}

.card-header {
    display: flex;
    align-items: center;
    height: 29px;
    padding-right: 8px;
    background-color: var(--lavender);
}

.card-icon {
    width: 29px;
    height: 29px;
    background-color: var(--purple);
}

.card-header h2 {
    flex: 1;
    margin: 0 0 0 7px;
    font-size: 9px;
    font-weight: normal;
}

.card-header button {
    margin-left: 12px;
}

.card-body {
    display: grid;
    grid-template-columns: 87px 1fr;
    row-gap: 5px;
    padding: 5px 9px 10px;
}

.card-body label,
.label {
    font-size: 8px;
    line-height: 17px;
    color: #555;
}

.card-body sup {
    font-size: 7px;
    line-height: 0;
    vertical-align: 1px;
    margin-right: 1px;
}

.card-body input,
.card-body select,
.value {
    display: block;
    width: 100%;
    height: 22px;
    margin: 0;
    padding: 0 5px;
    border: 1px solid #868686;
    border-radius: 0;
    background-color: #fff;
    font: inherit;
    color: #555;
}

.select {
    display: grid;
    align-items: center;
}

.card-body select {
    grid-area: 1 / 1;
    height: 18px;
    padding: 0 7px;
    appearance: none;
    font-size: 8px;
}

.select svg {
    grid-area: 1 / 1;
    justify-self: end;
    width: 10px;
    height: 6px;
    margin-right: 6px;
    color: #777;
    pointer-events: none;
}

.error {
    margin: 0;
    height: 11px;
    line-height: 11px;
    font-size: 8px;
    color: #b0282e;
}

.value {
    display: flex;
    align-items: center;
    height: 21px;
    padding: 0 8px;
}

.token {
    display: flex;
    align-items: center;
    height: 16px;
    background-color: #e9dfe9;
    font-size: 8px;
    color: #333;
}

.token svg {
    width: 16px;
    height: 16px;
    margin-right: 5px;
}

.token button svg {
    width: 7px;
    height: 7px;
    margin: 0 2px;
}

/* Scrollbar */
.scrollbar {
    display: flex;
    flex-direction: column;
    width: 9px;
    background-color: #f4f4f4;
}

.scrollbar svg {
    width: 9px;
    height: 10px;
}

.track {
    flex: 1;
}

.thumb {
    height: 33%;
    margin-top: 66px;
    background-color: #c1c1c1;
}

/* Taskbar */
.taskbar {
    display: flex;
    height: 27px;
    background-color: var(--taskbar);
    color: #fff;
}

.taskbar button {
    width: 31px;
    flex-shrink: 0;
}

.taskbar button svg {
    width: 16px;
    height: 16px;
}

.taskbar text {
    fill: #fff;
    font-weight: bold;
    text-anchor: middle;
}

.taskbar .task-view {
    margin-right: 3px;
}

.taskbar .open {
    border-bottom: 2px solid #8ec1ea;
    padding-top: 2px;
}

.taskbar .focused {
    background-color: #50615f;
}

.task-search {
    display: flex;
    align-items: center;
    gap: 6px;
    width: 230px;
    padding-left: 7px;
    background-color: #f2f2f2;
    border: 1px solid #c9c9c9;
}

.tray {
    display: flex;
    align-items: center;
    gap: 5px;
    margin-left: auto;
    padding-right: 10px;
}

.tray svg {
    width: 11px;
    height: 11px;
}

.tray .small {
    width: 6px;
}

.tray button {
    width: 21px;
}

.tray button svg {
    width: 14px;
    height: 14px;
}

.clock {
    width: 38px;
    font-size: 8px;
    line-height: 12px;
    text-align: center;
    white-space: nowrap;
}
```
